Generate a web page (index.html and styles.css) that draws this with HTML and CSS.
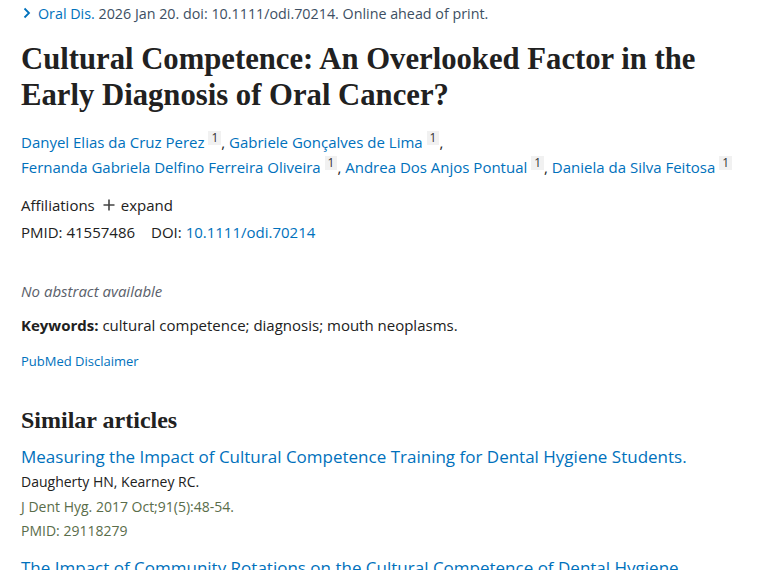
FILE: index.html
```html
<!DOCTYPE html>
<html lang="en">

<head>
    <meta charset="UTF-8">
    <meta name="viewport" content="width=device-width, initial-scale=1.0">
    <title>Cultural Competence - PubMed</title>
    <link rel="stylesheet" href="styles.css">
</head>

<body>

    <div class="article">
        <!-- Citation line -->
        <div class="source">
            <svg class="chevron" width="10" height="12" viewBox="0 0 10 12">
                <path d="M2.5 1.5 L7 6 L2.5 10.5" fill="none" stroke="#0071bc" stroke-width="1.8"/>
            </svg>
            <span><a href="#" class="journal">Oral Dis.</a> <span class="cit">2026 Jan 20. doi: 10.1111/odi.70214. Online ahead of print.</span></span>
        </div>

        <h1 class="heading-title">Cultural Competence: An Overlooked Factor in the Early Diagnosis of Oral Cancer?</h1>

        <div class="authors">
            <a href="#">Danyel Elias da Cruz Perez</a> <sup class="aff">1</sup>, <a href="#">Gabriele Gonçalves de Lima</a> <sup class="aff">1</sup>,<br>
            <a href="#">Fernanda Gabriela Delfino Ferreira Oliveira</a> <sup class="aff">1</sup>, <a href="#">Andrea Dos Anjos Pontual</a> <sup class="aff">1</sup>, <a href="#">Daniela da Silva Feitosa</a> <sup class="aff">1</sup>
        </div>

        <div class="affiliations">
            Affiliations
            <span class="expand">
                <svg width="12" height="12" viewBox="0 0 12 12">
                    <path d="M6 0.5 V11.5 M0.5 6 H11.5" stroke="#444" stroke-width="1.6"/>
                </svg>
                expand
            </span>
        </div>

        <div class="identifiers">
            <span>PMID: 41557486</span>
            <span>DOI: <a href="#">10.1111/odi.70214</a></span>
        </div>

        <p class="empty-abstract">No abstract available</p>

        <p class="keywords"><strong>Keywords:</strong> cultural competence; diagnosis; mouth neoplasms.</p>

        <a href="#" class="disclaimer">PubMed Disclaimer</a>

        <!-- Similar articles -->
        <div class="similar">
            <h2>Similar articles</h2>

            <div class="docsum">
                <a href="#" class="docsum-title">Measuring the Impact of Cultural Competence Training for Dental Hygiene Students.</a>
                <div class="docsum-authors">Daugherty HN, Kearney RC.</div>
                <div class="docsum-journal">J Dent Hyg. 2017 Oct;91(5):48-54.</div>
                <div class="docsum-journal">PMID: 29118279</div>
            </div>

            <div class="docsum">
                <a href="#" class="docsum-title">The Impact of Community Rotations on the Cultural Competence of Dental Hygiene</a>
            </div>
        </div>
    </div>

</body>

</html>
```

FILE: styles.css
```css
body {
    font-family: "Open Sans", "Noto Sans", sans-serif;
    margin: 0;
    padding: 0;
    background-color: white;
    color: #212121;
}

a {
    color: #0071bc;
    text-decoration: none;
}

.article {
    padding: 0 21px;
}

/* Citation line */
.source {
    display: flex;
    align-items: center;
    gap: 6px;
    height: 26px;
    font-size: 14.3px;
    color: #3d4f63;
}

.chevron {
    margin-left: 1px;
}

.heading-title {
    font-family: "Liberation Serif", serif;
    font-size: 30.7px;
    line-height: 36px;
    font-weight: bold;
    margin: 15px 0 17px;
}

.authors {
    font-size: 15px;
    line-height: 25px;
}

.aff {
    display: inline-block;
    font-size: 12px;
    line-height: 14px;
    padding: 0 3px;
    background: #f1f1f1;
    color: #333;
    vertical-align: 6px;
}

.affiliations {
    font-size: 15px;
    margin-top: 12px;
    line-height: 26px;
    display: flex;
    align-items: center;
    gap: 8px;
}

.expand {
    display: flex;
    align-items: center;
    gap: 6px;
}

.identifiers {
    font-size: 15px;
    line-height: 28px;
    display: flex;
    gap: 16px;
}

.empty-abstract {
    font-size: 15px;
    font-style: italic;
    color: #5b616b;
    margin: 31px 0 0;
    line-height: 28px;
}

.keywords {
    font-size: 15px;
    margin: 6px 0 0;
    line-height: 28px;
}

.disclaimer {
    display: block;
    font-size: 13px;
    margin-top: 12px;
    line-height: 20px;
}

.similar h2 {
    font-family: "Liberation Serif", serif;
    font-size: 24px;
    margin: 34px 0 8px;
    line-height: 30px;
}

.docsum {
    margin-bottom: 11px;
}

.docsum-title {
    display: block;
    font-size: 17px;
    line-height: 28px;
    white-space: nowrap;
}

.docsum-authors {
    font-size: 14px;
    line-height: 22px;
    margin-bottom: 2px;
}

.docsum-journal {
    font-size: 14px;
    line-height: 24px;
    color: #5a6d4a;
}
```
